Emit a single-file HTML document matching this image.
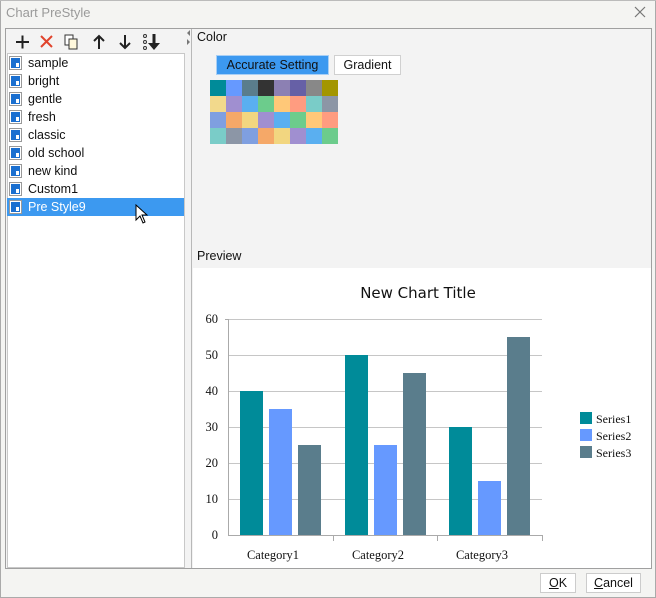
<!DOCTYPE html>
<html><head><style>
*{margin:0;padding:0;box-sizing:border-box}
body{width:656px;height:598px;position:relative;background:#f4f4f2;font-family:"Liberation Sans",sans-serif;font-size:12px;color:#111;overflow:hidden}
.a{position:absolute}
.item{position:absolute;left:7px;width:177px;height:18px;line-height:19px;padding-left:21px;font-size:12.5px}
.ic{position:absolute;left:2px;top:2px;width:13px;height:14px;border:1px solid #999;background:#fff}
.ic:after{content:"";position:absolute;left:1px;top:1px;width:9px;height:10px;background:#1a6fd0}
.ic:before{content:"";position:absolute;left:6px;top:6px;width:3px;height:4px;background:#fff;z-index:2}
</style></head><body>
<div class="a" style="left:0;top:0;width:656px;height:598px;border:1px solid #aaa;border-top:none"></div>
<div class="a" style="left:0;top:0;width:656px;height:1px;background:#bbb"></div>
<div class="a" style="left:6px;top:5px;color:#9a9a9a;font-size:13px">Chart PreStyle</div>
<svg class="a" style="left:634px;top:6px" width="12" height="12"><path d="M1 1L11 11M11 1L1 11" stroke="#777" stroke-width="1.2"/></svg>
<div class="a" style="left:5px;top:28px;width:647px;height:541px;border:1px solid #a0a0a0;background:#f3f3f3"></div>
<svg class="a" style="left:12px;top:33px" width="160" height="18">
<path d="M4 9H17M10.5 2.5V15.5" stroke="#222" stroke-width="2"/>
<path d="M29 3L40 14M40 3L29 14" stroke="#e0432c" stroke-width="2"/>
<rect x="53" y="2" width="8" height="10" fill="#fff" stroke="#333"/><rect x="57" y="6" width="8" height="10" fill="#fff8dc" stroke="#333"/>
<path d="M87 16V4M82 8L87 3L92 8" stroke="#222" stroke-width="2" fill="none"/>
<path d="M113 2V14M108 10L113 15L118 10" stroke="#222" stroke-width="2" fill="none"/>
<circle cx="133" cy="3" r="1.5" fill="none" stroke="#333"/><circle cx="133" cy="9" r="1.5" fill="none" stroke="#333"/><circle cx="133" cy="15" r="1.5" fill="none" stroke="#333"/>
<path d="M142 1V13" stroke="#222" stroke-width="3"/><path d="M136 10H148L142 17Z" fill="#222"/>
</svg>
<div class="a" style="left:7px;top:53px;width:178px;height:515px;border:1px solid #c8c8c8;background:#fff"></div>
<div class="item" style="top:54px"><span class="ic"></span>sample</div>
<div class="item" style="top:72px"><span class="ic"></span>bright</div>
<div class="item" style="top:90px"><span class="ic"></span>gentle</div>
<div class="item" style="top:108px"><span class="ic"></span>fresh</div>
<div class="item" style="top:126px"><span class="ic"></span>classic</div>
<div class="item" style="top:144px"><span class="ic"></span>old school</div>
<div class="item" style="top:162px"><span class="ic"></span>new kind</div>
<div class="item" style="top:180px"><span class="ic"></span>Custom1</div>
<div class="item" style="top:198px;background:#3c99f0;color:#fff"><span class="ic"></span>Pre Style9</div>
<svg class="a" style="left:135px;top:204px" width="14" height="20"><path d="M1 1V16L5 12L8 19L10 18L7 11H12Z" fill="#fff" stroke="#000"/></svg>
<svg class="a" style="left:186px;top:30px" width="5" height="16"><path d="M4 0V6L1 3Z M1 9V15L4 12Z" fill="#777"/></svg>
<div class="a" style="left:191px;top:29px;width:1px;height:539px;background:#b8b8b8"></div>
<div class="a" style="left:197px;top:30px;font-size:12.5px">Color</div>
<div class="a" style="left:216px;top:55px;width:113px;height:20px;background:#3c99f0;border:1px solid #a8cff5;text-align:center;line-height:18px;font-size:12.5px;color:#111">Accurate Setting</div>
<div class="a" style="left:334px;top:55px;width:67px;height:20px;background:#fff;border:1px solid #d0d0d0;text-align:center;line-height:18px;font-size:12.5px">Gradient</div>
<div class="a" style="left:197px;top:249px;font-size:12.5px">Preview</div>
<div class="a" style="left:193px;top:268px;width:458px;height:300px;background:#fff"></div>
<svg class="a" style="left:193px;top:268px" width="458" height="300">
<text x="225" y="30" font-family="DejaVu Sans,sans-serif" font-size="15" text-anchor="middle" fill="#111">New Chart Title</text>
<g stroke="#c6c6c6" stroke-width="1">
<path d="M35 51.5H349M35 87.5H349M35 123.5H349M35 159.5H349M35 195.5H349M35 231.5H349"/>
</g>
<path d="M35.5 51V267.5H349.5M140.5 267V273M244.5 267V273M349.5 267V273M32 51.5H36" stroke="#aaa" fill="none"/>
<g font-family="Liberation Serif,serif" font-size="12.5" fill="#111" text-anchor="end">
<text x="25" y="55">60</text><text x="25" y="91">50</text><text x="25" y="127">40</text><text x="25" y="163">30</text><text x="25" y="199">20</text><text x="25" y="235">10</text><text x="25" y="271">0</text>
</g>
<g>
<rect x="47" y="123" width="23" height="144" fill="#008b99"/>
<rect x="76" y="141" width="23" height="126" fill="#6699ff"/>
<rect x="105" y="177" width="23" height="90" fill="#5a7d8c"/>
<rect x="152" y="87" width="23" height="180" fill="#008b99"/>
<rect x="181" y="177" width="23" height="90" fill="#6699ff"/>
<rect x="210" y="105" width="23" height="162" fill="#5a7d8c"/>
<rect x="256" y="159" width="23" height="108" fill="#008b99"/>
<rect x="285" y="213" width="23" height="54" fill="#6699ff"/>
<rect x="314" y="69" width="23" height="198" fill="#5a7d8c"/>
</g>
<g font-family="Liberation Serif,serif" font-size="12.5" fill="#111" text-anchor="middle">
<text x="80" y="291">Category1</text><text x="185" y="291">Category2</text><text x="289" y="291">Category3</text>
</g>
<rect x="387" y="144" width="12" height="12" fill="#008b99"/>
<rect x="387" y="161" width="12" height="12" fill="#6699ff"/>
<rect x="387" y="178" width="12" height="12" fill="#5a7d8c"/>
<g font-family="Liberation Serif,serif" font-size="12" fill="#111">
<text x="403" y="155">Series1</text><text x="403" y="172">Series2</text><text x="403" y="189">Series3</text>
</g>
</svg>
<div class="a" style="left:540px;top:573px;width:36px;height:20px;background:#fff;border:1px solid #ccc;text-align:center;line-height:18px;font-size:12.5px"><u>O</u>K</div>
<div class="a" style="left:586px;top:573px;width:55px;height:20px;background:#fff;border:1px solid #ccc;text-align:center;line-height:18px;font-size:12.5px"><u>C</u>ancel</div>
<div class="a" style="left:210px;top:80px;width:129px;height:64px;display:grid;grid-template-columns:repeat(8,16px);grid-auto-rows:16px">
<i style="background:#008b99"></i><i style="background:#6699ff"></i><i style="background:#5a7d8c"></i><i style="background:#333"></i><i style="background:#8c80b3"></i><i style="background:#6660a6"></i><i style="background:#888"></i><i style="background:#a39600"></i>
<i style="background:#f2d98c"></i><i style="background:#a08fd0"></i><i style="background:#5aaff0"></i><i style="background:#6ccc8c"></i><i style="background:#ffc878"></i><i style="background:#ff9c80"></i><i style="background:#7accc8"></i><i style="background:#8c96a6"></i>
<i style="background:#7f9fe0"></i><i style="background:#f5a868"></i><i style="background:#f2d680"></i><i style="background:#a08fd0"></i><i style="background:#5aaff0"></i><i style="background:#6ccc8c"></i><i style="background:#ffc878"></i><i style="background:#ff9c80"></i>
<i style="background:#7accc8"></i><i style="background:#8c96a6"></i><i style="background:#7f9fe0"></i><i style="background:#f5a868"></i><i style="background:#f2d680"></i><i style="background:#a08fd0"></i><i style="background:#5aaff0"></i><i style="background:#6ccc8c"></i>
</div>
</body></html>
